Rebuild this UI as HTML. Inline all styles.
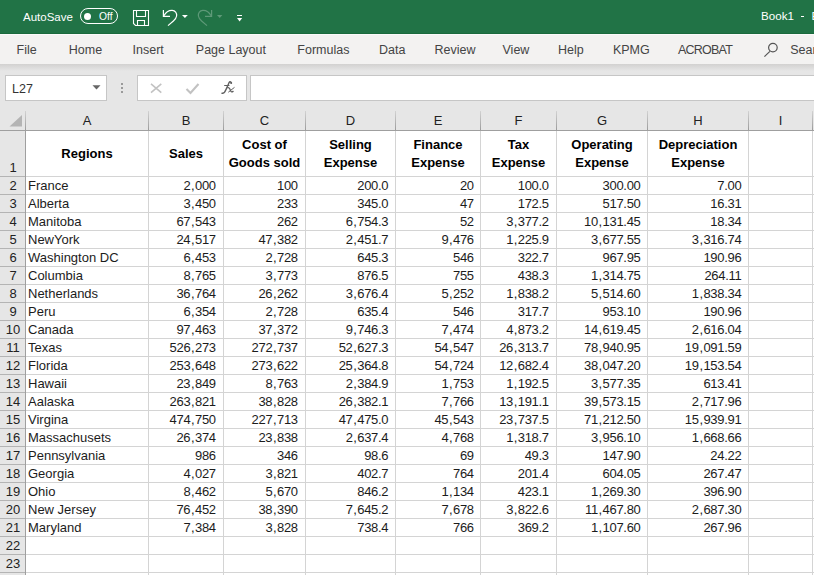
<!DOCTYPE html>
<html><head><meta charset="utf-8"><style>
*{margin:0;padding:0;box-sizing:border-box}
html,body{width:814px;height:575px;overflow:hidden;background:#e6e6e6;font-family:"Liberation Sans",sans-serif}
.a{position:absolute}
.tb{left:0;top:0;width:814px;height:34px;background:#217346}
.rb{left:0;top:34px;width:814px;height:30px;background:#f3f2f1}
.tab{top:42px;font-size:12.5px;color:#444;line-height:16px;white-space:nowrap}
.grid{left:26px;top:131px;width:788px;height:444px;background:#fff}
.vl{width:1px;background:#d4d4d4}
.hl{height:1px;background:#d4d4d4}
.cm{font-style:normal;margin:0 0.7px}
.cell{font-size:13px;color:#1c1c1c;line-height:17px;height:17px;white-space:nowrap}
.hd{font-size:13px;color:#222;line-height:17px;height:17px;text-align:center;white-space:nowrap}
.bh{font-weight:bold;font-size:13px;line-height:18px;text-align:center;color:#000;display:flex;align-items:center;justify-content:center;white-space:nowrap}
</style></head><body>

<div class="a tb"></div>
<div class="a" style="left:0;top:33px;width:814px;height:1px;background:#1a6a3d"></div>
<div class="a rb"></div>
<div class="a" style="left:0;top:34px;width:814px;height:1px;background:#fbfafa"></div>
<div class="a" style="left:0;top:64px;width:814px;height:7px;background:linear-gradient(#d2d1d0,#e6e6e6)"></div>
<div class="a" style="left:23px;top:10px;font-size:11.5px;color:#fff;line-height:14px">AutoSave</div>
<div class="a" style="left:80px;top:8px;width:38px;height:16px;border:1.3px solid #fff;border-radius:8px"></div>
<div class="a" style="left:84.3px;top:12.6px;width:7px;height:7px;border-radius:50%;background:#fff"></div>
<div class="a" style="left:99px;top:10px;font-size:10.3px;color:#fff;line-height:13px">Off</div>
<svg class="a" style="left:130px;top:6px" width="24" height="24" viewBox="0 0 24 24" fill="none" stroke="#fff" stroke-width="1.1">
<path d="M3.5 4.5 H18.5 V19.5 H5.5 L3.5 17.5 Z"/><path d="M6.5 4.5 V10.5 H15.5 V4.5"/><path d="M7.5 19.5 V14.5 H14.5 V19.5"/></svg>
<svg class="a" style="left:158px;top:6px" width="32" height="24" viewBox="0 0 32 24" fill="none" stroke="#fff" stroke-width="1.2">
<path d="M5.4 3.9 V10.3 H12"/><path d="M5.9 9.8 C7.9 5.9 11.3 4.2 14.2 4.3 C17.2 4.4 19 7 18.6 10 C18.3 12 17 13.6 15.4 15 L10 19.6"/></svg>
<svg class="a" style="left:181.6px;top:15px" width="6" height="4" viewBox="0 0 6 4"><path d="M0 0H5.8L2.9 3.1Z" fill="#fff"/></svg>
<svg class="a" style="left:185px;top:6px;transform:scaleX(-1)" width="32" height="24" viewBox="0 0 32 24" fill="none" stroke="#5e9978" stroke-width="1.2">
<path d="M5.4 3.9 V10.3 H12"/><path d="M5.9 9.8 C7.9 5.9 11.3 4.2 14.2 4.3 C17.2 4.4 19 7 18.6 10 C18.3 12 17 13.6 15.4 15 L10 19.6"/></svg>
<svg class="a" style="left:216.8px;top:15px" width="6" height="4" viewBox="0 0 6 4"><path d="M0 0H5.4L2.7 3Z" fill="#5e9978"/></svg>
<div class="a" style="left:237px;top:14.8px;width:5.2px;height:1.4px;background:#fff"></div>
<svg class="a" style="left:237px;top:17.6px" width="6" height="4" viewBox="0 0 6 4"><path d="M0 0H5.2L2.6 3.5Z" fill="#fff"/></svg>
<div class="a" style="left:761px;top:9px;font-size:11.6px;color:#fff;line-height:14px;white-space:nowrap">Book1</div>
<div class="a" style="left:800.5px;top:16px;width:3.5px;height:1.1px;background:#fff"></div>
<div class="a" style="left:811.5px;top:9px;font-size:11.6px;color:#fff;line-height:14px;white-space:nowrap">Excel</div>
<div class="a tab" style="left:16.5px">File</div>
<div class="a tab" style="left:68.8px">Home</div>
<div class="a tab" style="left:132.5px">Insert</div>
<div class="a tab" style="left:195.8px">Page Layout</div>
<div class="a tab" style="left:297.3px">Formulas</div>
<div class="a tab" style="left:379.0px">Data</div>
<div class="a tab" style="left:434.5px">Review</div>
<div class="a tab" style="left:502.5px">View</div>
<div class="a tab" style="left:558.0px">Help</div>
<div class="a tab" style="left:612.9px">KPMG</div>
<div class="a tab" style="left:677.9px;letter-spacing:-0.75px">ACROBAT</div>
<div class="a tab" style="left:790.2px">Search</div>
<svg class="a" style="left:763px;top:41px" width="16" height="17" viewBox="0 0 16 17" fill="none" stroke="#555" stroke-width="1.2">
<circle cx="9.9" cy="6.6" r="4.3"/><path d="M6.9 10.4 L1.4 15.6"/></svg>
<div class="a" style="left:5px;top:75px;width:102px;height:26px;background:#fff;border:1px solid #c6c6c6"></div>
<div class="a" style="left:12px;top:82px;font-size:12.5px;color:#333;line-height:15px">L27</div>
<svg class="a" style="left:92px;top:85px" width="9" height="5" viewBox="0 0 9 5"><path d="M0.5 0.2H8.5L4.5 4.4Z" fill="#666"/></svg>
<div class="a" style="left:121px;top:83px;width:2px;height:2px;background:#9a9a9a"></div>
<div class="a" style="left:121px;top:87px;width:2px;height:2px;background:#9a9a9a"></div>
<div class="a" style="left:121px;top:91px;width:2px;height:2px;background:#9a9a9a"></div>
<div class="a" style="left:137px;top:75px;width:110px;height:26px;background:#fff;border:1px solid #c6c6c6"></div>
<svg class="a" style="left:149px;top:82px" width="14" height="13" viewBox="0 0 14 13" fill="none" stroke="#c2c2c2" stroke-width="1.6">
<path d="M2 1.9 L12.3 10.6 M12.3 1.9 L2 10.6"/></svg>
<svg class="a" style="left:185px;top:82px" width="15" height="13" viewBox="0 0 15 13" fill="none" stroke="#c2c2c2" stroke-width="2.1">
<path d="M1.5 7 L5.5 11 L13.5 2"/></svg>
<svg class="a" style="left:220px;top:80px" width="16" height="16" viewBox="0 0 16 16" fill="none" stroke="#606060" stroke-width="1.25" stroke-linecap="round">
<path d="M11.3 2.9 C10.9 1.5 9.6 1.5 9.0 2.8 C8.2 4.6 5.6 10.6 4.6 12.2 C4.0 13.1 3.2 13.6 2.0 13.2" stroke-width="1.45"/><path d="M4.6 5.5 H9.0" stroke-width="1.1"/><path d="M7.8 7.7 C8.7 7.4 9.3 7.8 9.9 9 L10.7 11 C11.1 11.9 11.9 12.1 13.1 11.4" stroke-width="1.3"/><path d="M14.2 7.6 L8.6 12" stroke-width="1.0"/><circle cx="11.2" cy="2.9" r="1.0" fill="#606060" stroke="none"/></svg>
<div class="a" style="left:250px;top:75px;width:570px;height:26px;background:#fff;border:1px solid #c6c6c6"></div>
<div class="a grid"></div>
<div class="a vl" style="left:148px;top:131px;height:444px"></div>
<div class="a vl" style="left:223px;top:131px;height:444px"></div>
<div class="a vl" style="left:305px;top:131px;height:444px"></div>
<div class="a vl" style="left:395px;top:131px;height:444px"></div>
<div class="a vl" style="left:480px;top:131px;height:444px"></div>
<div class="a vl" style="left:556px;top:131px;height:444px"></div>
<div class="a vl" style="left:647px;top:131px;height:444px"></div>
<div class="a vl" style="left:748px;top:131px;height:444px"></div>
<div class="a vl" style="left:812px;top:131px;height:444px"></div>
<div class="a hl" style="left:26px;top:176px;width:788px"></div>
<div class="a hl" style="left:26px;top:194px;width:788px"></div>
<div class="a hl" style="left:26px;top:212px;width:788px"></div>
<div class="a hl" style="left:26px;top:230px;width:788px"></div>
<div class="a hl" style="left:26px;top:248px;width:788px"></div>
<div class="a hl" style="left:26px;top:266px;width:788px"></div>
<div class="a hl" style="left:26px;top:284px;width:788px"></div>
<div class="a hl" style="left:26px;top:302px;width:788px"></div>
<div class="a hl" style="left:26px;top:320px;width:788px"></div>
<div class="a hl" style="left:26px;top:338px;width:788px"></div>
<div class="a hl" style="left:26px;top:356px;width:788px"></div>
<div class="a hl" style="left:26px;top:374px;width:788px"></div>
<div class="a hl" style="left:26px;top:392px;width:788px"></div>
<div class="a hl" style="left:26px;top:410px;width:788px"></div>
<div class="a hl" style="left:26px;top:428px;width:788px"></div>
<div class="a hl" style="left:26px;top:446px;width:788px"></div>
<div class="a hl" style="left:26px;top:464px;width:788px"></div>
<div class="a hl" style="left:26px;top:482px;width:788px"></div>
<div class="a hl" style="left:26px;top:500px;width:788px"></div>
<div class="a hl" style="left:26px;top:518px;width:788px"></div>
<div class="a hl" style="left:26px;top:536px;width:788px"></div>
<div class="a hl" style="left:26px;top:554px;width:788px"></div>
<div class="a hl" style="left:26px;top:572px;width:788px"></div>
<div class="a" style="left:148px;top:111px;width:1px;height:19px;background:linear-gradient(#d2d2d2,#9c9c9c)"></div>
<div class="a" style="left:223px;top:111px;width:1px;height:19px;background:linear-gradient(#d2d2d2,#9c9c9c)"></div>
<div class="a" style="left:305px;top:111px;width:1px;height:19px;background:linear-gradient(#d2d2d2,#9c9c9c)"></div>
<div class="a" style="left:395px;top:111px;width:1px;height:19px;background:linear-gradient(#d2d2d2,#9c9c9c)"></div>
<div class="a" style="left:480px;top:111px;width:1px;height:19px;background:linear-gradient(#d2d2d2,#9c9c9c)"></div>
<div class="a" style="left:556px;top:111px;width:1px;height:19px;background:linear-gradient(#d2d2d2,#9c9c9c)"></div>
<div class="a" style="left:647px;top:111px;width:1px;height:19px;background:linear-gradient(#d2d2d2,#9c9c9c)"></div>
<div class="a" style="left:748px;top:111px;width:1px;height:19px;background:linear-gradient(#d2d2d2,#9c9c9c)"></div>
<div class="a" style="left:812px;top:111px;width:1px;height:19px;background:linear-gradient(#d2d2d2,#9c9c9c)"></div>
<div class="a" style="left:0;top:130px;width:814px;height:1px;background:#9f9f9f"></div>
<div class="a" style="left:25px;top:111px;width:1px;height:19px;background:linear-gradient(#d2d2d2,#9c9c9c)"></div>
<div class="a" style="left:25px;top:130px;width:1px;height:445px;background:#9f9f9f"></div>
<div class="a" style="left:0;top:176px;width:25px;height:1px;background:#b4b4b4"></div>
<div class="a" style="left:0;top:194px;width:25px;height:1px;background:#b4b4b4"></div>
<div class="a" style="left:0;top:212px;width:25px;height:1px;background:#b4b4b4"></div>
<div class="a" style="left:0;top:230px;width:25px;height:1px;background:#b4b4b4"></div>
<div class="a" style="left:0;top:248px;width:25px;height:1px;background:#b4b4b4"></div>
<div class="a" style="left:0;top:266px;width:25px;height:1px;background:#b4b4b4"></div>
<div class="a" style="left:0;top:284px;width:25px;height:1px;background:#b4b4b4"></div>
<div class="a" style="left:0;top:302px;width:25px;height:1px;background:#b4b4b4"></div>
<div class="a" style="left:0;top:320px;width:25px;height:1px;background:#b4b4b4"></div>
<div class="a" style="left:0;top:338px;width:25px;height:1px;background:#b4b4b4"></div>
<div class="a" style="left:0;top:356px;width:25px;height:1px;background:#b4b4b4"></div>
<div class="a" style="left:0;top:374px;width:25px;height:1px;background:#b4b4b4"></div>
<div class="a" style="left:0;top:392px;width:25px;height:1px;background:#b4b4b4"></div>
<div class="a" style="left:0;top:410px;width:25px;height:1px;background:#b4b4b4"></div>
<div class="a" style="left:0;top:428px;width:25px;height:1px;background:#b4b4b4"></div>
<div class="a" style="left:0;top:446px;width:25px;height:1px;background:#b4b4b4"></div>
<div class="a" style="left:0;top:464px;width:25px;height:1px;background:#b4b4b4"></div>
<div class="a" style="left:0;top:482px;width:25px;height:1px;background:#b4b4b4"></div>
<div class="a" style="left:0;top:500px;width:25px;height:1px;background:#b4b4b4"></div>
<div class="a" style="left:0;top:518px;width:25px;height:1px;background:#b4b4b4"></div>
<div class="a" style="left:0;top:536px;width:25px;height:1px;background:#b4b4b4"></div>
<div class="a" style="left:0;top:554px;width:25px;height:1px;background:#b4b4b4"></div>
<div class="a" style="left:0;top:572px;width:25px;height:1px;background:#b4b4b4"></div>
<svg class="a" style="left:8px;top:114px" width="15" height="13" viewBox="0 0 15 13"><path d="M14 1 V12.5 H1.5 Z" fill="#b4b4b4"/></svg>
<div class="a hd" style="left:26px;top:112px;width:122px">A</div>
<div class="a hd" style="left:149px;top:112px;width:74px">B</div>
<div class="a hd" style="left:224px;top:112px;width:81px">C</div>
<div class="a hd" style="left:306px;top:112px;width:89px">D</div>
<div class="a hd" style="left:396px;top:112px;width:84px">E</div>
<div class="a hd" style="left:481px;top:112px;width:75px">F</div>
<div class="a hd" style="left:557px;top:112px;width:90px">G</div>
<div class="a hd" style="left:648px;top:112px;width:100px">H</div>
<div class="a hd" style="left:749px;top:112px;width:63px">I</div>
<div class="a hd" style="left:0.5px;top:159px;width:25px">1</div>
<div class="a hd" style="left:0.5px;top:177px;width:25px">2</div>
<div class="a hd" style="left:0.5px;top:195px;width:25px">3</div>
<div class="a hd" style="left:0.5px;top:213px;width:25px">4</div>
<div class="a hd" style="left:0.5px;top:231px;width:25px">5</div>
<div class="a hd" style="left:0.5px;top:249px;width:25px">6</div>
<div class="a hd" style="left:0.5px;top:267px;width:25px">7</div>
<div class="a hd" style="left:0.5px;top:285px;width:25px">8</div>
<div class="a hd" style="left:0.5px;top:303px;width:25px">9</div>
<div class="a hd" style="left:0.5px;top:321px;width:25px">10</div>
<div class="a hd" style="left:0.5px;top:339px;width:25px">11</div>
<div class="a hd" style="left:0.5px;top:357px;width:25px">12</div>
<div class="a hd" style="left:0.5px;top:375px;width:25px">13</div>
<div class="a hd" style="left:0.5px;top:393px;width:25px">14</div>
<div class="a hd" style="left:0.5px;top:411px;width:25px">15</div>
<div class="a hd" style="left:0.5px;top:429px;width:25px">16</div>
<div class="a hd" style="left:0.5px;top:447px;width:25px">17</div>
<div class="a hd" style="left:0.5px;top:465px;width:25px">18</div>
<div class="a hd" style="left:0.5px;top:483px;width:25px">19</div>
<div class="a hd" style="left:0.5px;top:501px;width:25px">20</div>
<div class="a hd" style="left:0.5px;top:519px;width:25px">21</div>
<div class="a hd" style="left:0.5px;top:537px;width:25px">22</div>
<div class="a hd" style="left:0.5px;top:555px;width:25px">23</div>
<div class="a bh" style="left:26px;top:131px;width:122px;height:45px">Regions</div>
<div class="a bh" style="left:149px;top:131px;width:74px;height:45px">Sales</div>
<div class="a bh" style="left:224px;top:131px;width:81px;height:45px">Cost of<br>Goods sold</div>
<div class="a bh" style="left:306px;top:131px;width:89px;height:45px">Selling<br>Expense</div>
<div class="a bh" style="left:396px;top:131px;width:84px;height:45px">Finance<br>Expense</div>
<div class="a bh" style="left:481px;top:131px;width:75px;height:45px">Tax<br>Expense</div>
<div class="a bh" style="left:557px;top:131px;width:90px;height:45px">Operating<br>Expense</div>
<div class="a bh" style="left:648px;top:131px;width:100px;height:45px">Depreciation<br>Expense</div>
<div class="a cell" style="left:28px;top:177px">France</div>
<div class="a cell" style="left:95.8px;top:177px;width:120px;text-align:right;letter-spacing:-0.3px">2<i class="cm">,</i>000</div>
<div class="a cell" style="left:177.8px;top:177px;width:120px;text-align:right;letter-spacing:-0.3px">100</div>
<div class="a cell" style="left:268.3px;top:177px;width:120px;text-align:right;letter-spacing:-0.3px">200.0</div>
<div class="a cell" style="left:353.8px;top:177px;width:120px;text-align:right;letter-spacing:-0.3px">20</div>
<div class="a cell" style="left:428.8px;top:177px;width:120px;text-align:right;letter-spacing:-0.3px">100.0</div>
<div class="a cell" style="left:520.5px;top:177px;width:120px;text-align:right;letter-spacing:-0.3px">300.00</div>
<div class="a cell" style="left:621.4px;top:177px;width:120px;text-align:right;letter-spacing:-0.3px">7.00</div>
<div class="a cell" style="left:28px;top:195px">Alberta</div>
<div class="a cell" style="left:95.8px;top:195px;width:120px;text-align:right;letter-spacing:-0.3px">3<i class="cm">,</i>450</div>
<div class="a cell" style="left:177.8px;top:195px;width:120px;text-align:right;letter-spacing:-0.3px">233</div>
<div class="a cell" style="left:268.3px;top:195px;width:120px;text-align:right;letter-spacing:-0.3px">345.0</div>
<div class="a cell" style="left:353.8px;top:195px;width:120px;text-align:right;letter-spacing:-0.3px">47</div>
<div class="a cell" style="left:428.8px;top:195px;width:120px;text-align:right;letter-spacing:-0.3px">172.5</div>
<div class="a cell" style="left:520.5px;top:195px;width:120px;text-align:right;letter-spacing:-0.3px">517.50</div>
<div class="a cell" style="left:621.4px;top:195px;width:120px;text-align:right;letter-spacing:-0.3px">16.31</div>
<div class="a cell" style="left:28px;top:213px">Manitoba</div>
<div class="a cell" style="left:95.8px;top:213px;width:120px;text-align:right;letter-spacing:-0.3px">67<i class="cm">,</i>543</div>
<div class="a cell" style="left:177.8px;top:213px;width:120px;text-align:right;letter-spacing:-0.3px">262</div>
<div class="a cell" style="left:268.3px;top:213px;width:120px;text-align:right;letter-spacing:-0.3px">6<i class="cm">,</i>754.3</div>
<div class="a cell" style="left:353.8px;top:213px;width:120px;text-align:right;letter-spacing:-0.3px">52</div>
<div class="a cell" style="left:428.8px;top:213px;width:120px;text-align:right;letter-spacing:-0.3px">3<i class="cm">,</i>377.2</div>
<div class="a cell" style="left:520.5px;top:213px;width:120px;text-align:right;letter-spacing:-0.3px">10<i class="cm">,</i>131.45</div>
<div class="a cell" style="left:621.4px;top:213px;width:120px;text-align:right;letter-spacing:-0.3px">18.34</div>
<div class="a cell" style="left:28px;top:231px">NewYork</div>
<div class="a cell" style="left:95.8px;top:231px;width:120px;text-align:right;letter-spacing:-0.3px">24<i class="cm">,</i>517</div>
<div class="a cell" style="left:177.8px;top:231px;width:120px;text-align:right;letter-spacing:-0.3px">47<i class="cm">,</i>382</div>
<div class="a cell" style="left:268.3px;top:231px;width:120px;text-align:right;letter-spacing:-0.3px">2<i class="cm">,</i>451.7</div>
<div class="a cell" style="left:353.8px;top:231px;width:120px;text-align:right;letter-spacing:-0.3px">9<i class="cm">,</i>476</div>
<div class="a cell" style="left:428.8px;top:231px;width:120px;text-align:right;letter-spacing:-0.3px">1<i class="cm">,</i>225.9</div>
<div class="a cell" style="left:520.5px;top:231px;width:120px;text-align:right;letter-spacing:-0.3px">3<i class="cm">,</i>677.55</div>
<div class="a cell" style="left:621.4px;top:231px;width:120px;text-align:right;letter-spacing:-0.3px">3<i class="cm">,</i>316.74</div>
<div class="a cell" style="left:28px;top:249px">Washington DC</div>
<div class="a cell" style="left:95.8px;top:249px;width:120px;text-align:right;letter-spacing:-0.3px">6<i class="cm">,</i>453</div>
<div class="a cell" style="left:177.8px;top:249px;width:120px;text-align:right;letter-spacing:-0.3px">2<i class="cm">,</i>728</div>
<div class="a cell" style="left:268.3px;top:249px;width:120px;text-align:right;letter-spacing:-0.3px">645.3</div>
<div class="a cell" style="left:353.8px;top:249px;width:120px;text-align:right;letter-spacing:-0.3px">546</div>
<div class="a cell" style="left:428.8px;top:249px;width:120px;text-align:right;letter-spacing:-0.3px">322.7</div>
<div class="a cell" style="left:520.5px;top:249px;width:120px;text-align:right;letter-spacing:-0.3px">967.95</div>
<div class="a cell" style="left:621.4px;top:249px;width:120px;text-align:right;letter-spacing:-0.3px">190.96</div>
<div class="a cell" style="left:28px;top:267px">Columbia</div>
<div class="a cell" style="left:95.8px;top:267px;width:120px;text-align:right;letter-spacing:-0.3px">8<i class="cm">,</i>765</div>
<div class="a cell" style="left:177.8px;top:267px;width:120px;text-align:right;letter-spacing:-0.3px">3<i class="cm">,</i>773</div>
<div class="a cell" style="left:268.3px;top:267px;width:120px;text-align:right;letter-spacing:-0.3px">876.5</div>
<div class="a cell" style="left:353.8px;top:267px;width:120px;text-align:right;letter-spacing:-0.3px">755</div>
<div class="a cell" style="left:428.8px;top:267px;width:120px;text-align:right;letter-spacing:-0.3px">438.3</div>
<div class="a cell" style="left:520.5px;top:267px;width:120px;text-align:right;letter-spacing:-0.3px">1<i class="cm">,</i>314.75</div>
<div class="a cell" style="left:621.4px;top:267px;width:120px;text-align:right;letter-spacing:-0.3px">264.11</div>
<div class="a cell" style="left:28px;top:285px">Netherlands</div>
<div class="a cell" style="left:95.8px;top:285px;width:120px;text-align:right;letter-spacing:-0.3px">36<i class="cm">,</i>764</div>
<div class="a cell" style="left:177.8px;top:285px;width:120px;text-align:right;letter-spacing:-0.3px">26<i class="cm">,</i>262</div>
<div class="a cell" style="left:268.3px;top:285px;width:120px;text-align:right;letter-spacing:-0.3px">3<i class="cm">,</i>676.4</div>
<div class="a cell" style="left:353.8px;top:285px;width:120px;text-align:right;letter-spacing:-0.3px">5<i class="cm">,</i>252</div>
<div class="a cell" style="left:428.8px;top:285px;width:120px;text-align:right;letter-spacing:-0.3px">1<i class="cm">,</i>838.2</div>
<div class="a cell" style="left:520.5px;top:285px;width:120px;text-align:right;letter-spacing:-0.3px">5<i class="cm">,</i>514.60</div>
<div class="a cell" style="left:621.4px;top:285px;width:120px;text-align:right;letter-spacing:-0.3px">1<i class="cm">,</i>838.34</div>
<div class="a cell" style="left:28px;top:303px">Peru</div>
<div class="a cell" style="left:95.8px;top:303px;width:120px;text-align:right;letter-spacing:-0.3px">6<i class="cm">,</i>354</div>
<div class="a cell" style="left:177.8px;top:303px;width:120px;text-align:right;letter-spacing:-0.3px">2<i class="cm">,</i>728</div>
<div class="a cell" style="left:268.3px;top:303px;width:120px;text-align:right;letter-spacing:-0.3px">635.4</div>
<div class="a cell" style="left:353.8px;top:303px;width:120px;text-align:right;letter-spacing:-0.3px">546</div>
<div class="a cell" style="left:428.8px;top:303px;width:120px;text-align:right;letter-spacing:-0.3px">317.7</div>
<div class="a cell" style="left:520.5px;top:303px;width:120px;text-align:right;letter-spacing:-0.3px">953.10</div>
<div class="a cell" style="left:621.4px;top:303px;width:120px;text-align:right;letter-spacing:-0.3px">190.96</div>
<div class="a cell" style="left:28px;top:321px">Canada</div>
<div class="a cell" style="left:95.8px;top:321px;width:120px;text-align:right;letter-spacing:-0.3px">97<i class="cm">,</i>463</div>
<div class="a cell" style="left:177.8px;top:321px;width:120px;text-align:right;letter-spacing:-0.3px">37<i class="cm">,</i>372</div>
<div class="a cell" style="left:268.3px;top:321px;width:120px;text-align:right;letter-spacing:-0.3px">9<i class="cm">,</i>746.3</div>
<div class="a cell" style="left:353.8px;top:321px;width:120px;text-align:right;letter-spacing:-0.3px">7<i class="cm">,</i>474</div>
<div class="a cell" style="left:428.8px;top:321px;width:120px;text-align:right;letter-spacing:-0.3px">4<i class="cm">,</i>873.2</div>
<div class="a cell" style="left:520.5px;top:321px;width:120px;text-align:right;letter-spacing:-0.3px">14<i class="cm">,</i>619.45</div>
<div class="a cell" style="left:621.4px;top:321px;width:120px;text-align:right;letter-spacing:-0.3px">2<i class="cm">,</i>616.04</div>
<div class="a cell" style="left:28px;top:339px">Texas</div>
<div class="a cell" style="left:95.8px;top:339px;width:120px;text-align:right;letter-spacing:-0.3px">526<i class="cm">,</i>273</div>
<div class="a cell" style="left:177.8px;top:339px;width:120px;text-align:right;letter-spacing:-0.3px">272<i class="cm">,</i>737</div>
<div class="a cell" style="left:268.3px;top:339px;width:120px;text-align:right;letter-spacing:-0.3px">52<i class="cm">,</i>627.3</div>
<div class="a cell" style="left:353.8px;top:339px;width:120px;text-align:right;letter-spacing:-0.3px">54<i class="cm">,</i>547</div>
<div class="a cell" style="left:428.8px;top:339px;width:120px;text-align:right;letter-spacing:-0.3px">26<i class="cm">,</i>313.7</div>
<div class="a cell" style="left:520.5px;top:339px;width:120px;text-align:right;letter-spacing:-0.3px">78<i class="cm">,</i>940.95</div>
<div class="a cell" style="left:621.4px;top:339px;width:120px;text-align:right;letter-spacing:-0.3px">19<i class="cm">,</i>091.59</div>
<div class="a cell" style="left:28px;top:357px">Florida</div>
<div class="a cell" style="left:95.8px;top:357px;width:120px;text-align:right;letter-spacing:-0.3px">253<i class="cm">,</i>648</div>
<div class="a cell" style="left:177.8px;top:357px;width:120px;text-align:right;letter-spacing:-0.3px">273<i class="cm">,</i>622</div>
<div class="a cell" style="left:268.3px;top:357px;width:120px;text-align:right;letter-spacing:-0.3px">25<i class="cm">,</i>364.8</div>
<div class="a cell" style="left:353.8px;top:357px;width:120px;text-align:right;letter-spacing:-0.3px">54<i class="cm">,</i>724</div>
<div class="a cell" style="left:428.8px;top:357px;width:120px;text-align:right;letter-spacing:-0.3px">12<i class="cm">,</i>682.4</div>
<div class="a cell" style="left:520.5px;top:357px;width:120px;text-align:right;letter-spacing:-0.3px">38<i class="cm">,</i>047.20</div>
<div class="a cell" style="left:621.4px;top:357px;width:120px;text-align:right;letter-spacing:-0.3px">19<i class="cm">,</i>153.54</div>
<div class="a cell" style="left:28px;top:375px">Hawaii</div>
<div class="a cell" style="left:95.8px;top:375px;width:120px;text-align:right;letter-spacing:-0.3px">23<i class="cm">,</i>849</div>
<div class="a cell" style="left:177.8px;top:375px;width:120px;text-align:right;letter-spacing:-0.3px">8<i class="cm">,</i>763</div>
<div class="a cell" style="left:268.3px;top:375px;width:120px;text-align:right;letter-spacing:-0.3px">2<i class="cm">,</i>384.9</div>
<div class="a cell" style="left:353.8px;top:375px;width:120px;text-align:right;letter-spacing:-0.3px">1<i class="cm">,</i>753</div>
<div class="a cell" style="left:428.8px;top:375px;width:120px;text-align:right;letter-spacing:-0.3px">1<i class="cm">,</i>192.5</div>
<div class="a cell" style="left:520.5px;top:375px;width:120px;text-align:right;letter-spacing:-0.3px">3<i class="cm">,</i>577.35</div>
<div class="a cell" style="left:621.4px;top:375px;width:120px;text-align:right;letter-spacing:-0.3px">613.41</div>
<div class="a cell" style="left:28px;top:393px">Aalaska</div>
<div class="a cell" style="left:95.8px;top:393px;width:120px;text-align:right;letter-spacing:-0.3px">263<i class="cm">,</i>821</div>
<div class="a cell" style="left:177.8px;top:393px;width:120px;text-align:right;letter-spacing:-0.3px">38<i class="cm">,</i>828</div>
<div class="a cell" style="left:268.3px;top:393px;width:120px;text-align:right;letter-spacing:-0.3px">26<i class="cm">,</i>382.1</div>
<div class="a cell" style="left:353.8px;top:393px;width:120px;text-align:right;letter-spacing:-0.3px">7<i class="cm">,</i>766</div>
<div class="a cell" style="left:428.8px;top:393px;width:120px;text-align:right;letter-spacing:-0.3px">13<i class="cm">,</i>191.1</div>
<div class="a cell" style="left:520.5px;top:393px;width:120px;text-align:right;letter-spacing:-0.3px">39<i class="cm">,</i>573.15</div>
<div class="a cell" style="left:621.4px;top:393px;width:120px;text-align:right;letter-spacing:-0.3px">2<i class="cm">,</i>717.96</div>
<div class="a cell" style="left:28px;top:411px">Virgina</div>
<div class="a cell" style="left:95.8px;top:411px;width:120px;text-align:right;letter-spacing:-0.3px">474<i class="cm">,</i>750</div>
<div class="a cell" style="left:177.8px;top:411px;width:120px;text-align:right;letter-spacing:-0.3px">227<i class="cm">,</i>713</div>
<div class="a cell" style="left:268.3px;top:411px;width:120px;text-align:right;letter-spacing:-0.3px">47<i class="cm">,</i>475.0</div>
<div class="a cell" style="left:353.8px;top:411px;width:120px;text-align:right;letter-spacing:-0.3px">45<i class="cm">,</i>543</div>
<div class="a cell" style="left:428.8px;top:411px;width:120px;text-align:right;letter-spacing:-0.3px">23<i class="cm">,</i>737.5</div>
<div class="a cell" style="left:520.5px;top:411px;width:120px;text-align:right;letter-spacing:-0.3px">71<i class="cm">,</i>212.50</div>
<div class="a cell" style="left:621.4px;top:411px;width:120px;text-align:right;letter-spacing:-0.3px">15<i class="cm">,</i>939.91</div>
<div class="a cell" style="left:28px;top:429px">Massachusets</div>
<div class="a cell" style="left:95.8px;top:429px;width:120px;text-align:right;letter-spacing:-0.3px">26<i class="cm">,</i>374</div>
<div class="a cell" style="left:177.8px;top:429px;width:120px;text-align:right;letter-spacing:-0.3px">23<i class="cm">,</i>838</div>
<div class="a cell" style="left:268.3px;top:429px;width:120px;text-align:right;letter-spacing:-0.3px">2<i class="cm">,</i>637.4</div>
<div class="a cell" style="left:353.8px;top:429px;width:120px;text-align:right;letter-spacing:-0.3px">4<i class="cm">,</i>768</div>
<div class="a cell" style="left:428.8px;top:429px;width:120px;text-align:right;letter-spacing:-0.3px">1<i class="cm">,</i>318.7</div>
<div class="a cell" style="left:520.5px;top:429px;width:120px;text-align:right;letter-spacing:-0.3px">3<i class="cm">,</i>956.10</div>
<div class="a cell" style="left:621.4px;top:429px;width:120px;text-align:right;letter-spacing:-0.3px">1<i class="cm">,</i>668.66</div>
<div class="a cell" style="left:28px;top:447px">Pennsylvania</div>
<div class="a cell" style="left:95.8px;top:447px;width:120px;text-align:right;letter-spacing:-0.3px">986</div>
<div class="a cell" style="left:177.8px;top:447px;width:120px;text-align:right;letter-spacing:-0.3px">346</div>
<div class="a cell" style="left:268.3px;top:447px;width:120px;text-align:right;letter-spacing:-0.3px">98.6</div>
<div class="a cell" style="left:353.8px;top:447px;width:120px;text-align:right;letter-spacing:-0.3px">69</div>
<div class="a cell" style="left:428.8px;top:447px;width:120px;text-align:right;letter-spacing:-0.3px">49.3</div>
<div class="a cell" style="left:520.5px;top:447px;width:120px;text-align:right;letter-spacing:-0.3px">147.90</div>
<div class="a cell" style="left:621.4px;top:447px;width:120px;text-align:right;letter-spacing:-0.3px">24.22</div>
<div class="a cell" style="left:28px;top:465px">Georgia</div>
<div class="a cell" style="left:95.8px;top:465px;width:120px;text-align:right;letter-spacing:-0.3px">4<i class="cm">,</i>027</div>
<div class="a cell" style="left:177.8px;top:465px;width:120px;text-align:right;letter-spacing:-0.3px">3<i class="cm">,</i>821</div>
<div class="a cell" style="left:268.3px;top:465px;width:120px;text-align:right;letter-spacing:-0.3px">402.7</div>
<div class="a cell" style="left:353.8px;top:465px;width:120px;text-align:right;letter-spacing:-0.3px">764</div>
<div class="a cell" style="left:428.8px;top:465px;width:120px;text-align:right;letter-spacing:-0.3px">201.4</div>
<div class="a cell" style="left:520.5px;top:465px;width:120px;text-align:right;letter-spacing:-0.3px">604.05</div>
<div class="a cell" style="left:621.4px;top:465px;width:120px;text-align:right;letter-spacing:-0.3px">267.47</div>
<div class="a cell" style="left:28px;top:483px">Ohio</div>
<div class="a cell" style="left:95.8px;top:483px;width:120px;text-align:right;letter-spacing:-0.3px">8<i class="cm">,</i>462</div>
<div class="a cell" style="left:177.8px;top:483px;width:120px;text-align:right;letter-spacing:-0.3px">5<i class="cm">,</i>670</div>
<div class="a cell" style="left:268.3px;top:483px;width:120px;text-align:right;letter-spacing:-0.3px">846.2</div>
<div class="a cell" style="left:353.8px;top:483px;width:120px;text-align:right;letter-spacing:-0.3px">1<i class="cm">,</i>134</div>
<div class="a cell" style="left:428.8px;top:483px;width:120px;text-align:right;letter-spacing:-0.3px">423.1</div>
<div class="a cell" style="left:520.5px;top:483px;width:120px;text-align:right;letter-spacing:-0.3px">1<i class="cm">,</i>269.30</div>
<div class="a cell" style="left:621.4px;top:483px;width:120px;text-align:right;letter-spacing:-0.3px">396.90</div>
<div class="a cell" style="left:28px;top:501px">New Jersey</div>
<div class="a cell" style="left:95.8px;top:501px;width:120px;text-align:right;letter-spacing:-0.3px">76<i class="cm">,</i>452</div>
<div class="a cell" style="left:177.8px;top:501px;width:120px;text-align:right;letter-spacing:-0.3px">38<i class="cm">,</i>390</div>
<div class="a cell" style="left:268.3px;top:501px;width:120px;text-align:right;letter-spacing:-0.3px">7<i class="cm">,</i>645.2</div>
<div class="a cell" style="left:353.8px;top:501px;width:120px;text-align:right;letter-spacing:-0.3px">7<i class="cm">,</i>678</div>
<div class="a cell" style="left:428.8px;top:501px;width:120px;text-align:right;letter-spacing:-0.3px">3<i class="cm">,</i>822.6</div>
<div class="a cell" style="left:520.5px;top:501px;width:120px;text-align:right;letter-spacing:-0.3px">11<i class="cm">,</i>467.80</div>
<div class="a cell" style="left:621.4px;top:501px;width:120px;text-align:right;letter-spacing:-0.3px">2<i class="cm">,</i>687.30</div>
<div class="a cell" style="left:28px;top:519px">Maryland</div>
<div class="a cell" style="left:95.8px;top:519px;width:120px;text-align:right;letter-spacing:-0.3px">7<i class="cm">,</i>384</div>
<div class="a cell" style="left:177.8px;top:519px;width:120px;text-align:right;letter-spacing:-0.3px">3<i class="cm">,</i>828</div>
<div class="a cell" style="left:268.3px;top:519px;width:120px;text-align:right;letter-spacing:-0.3px">738.4</div>
<div class="a cell" style="left:353.8px;top:519px;width:120px;text-align:right;letter-spacing:-0.3px">766</div>
<div class="a cell" style="left:428.8px;top:519px;width:120px;text-align:right;letter-spacing:-0.3px">369.2</div>
<div class="a cell" style="left:520.5px;top:519px;width:120px;text-align:right;letter-spacing:-0.3px">1<i class="cm">,</i>107.60</div>
<div class="a cell" style="left:621.4px;top:519px;width:120px;text-align:right;letter-spacing:-0.3px">267.96</div>
</body></html>
